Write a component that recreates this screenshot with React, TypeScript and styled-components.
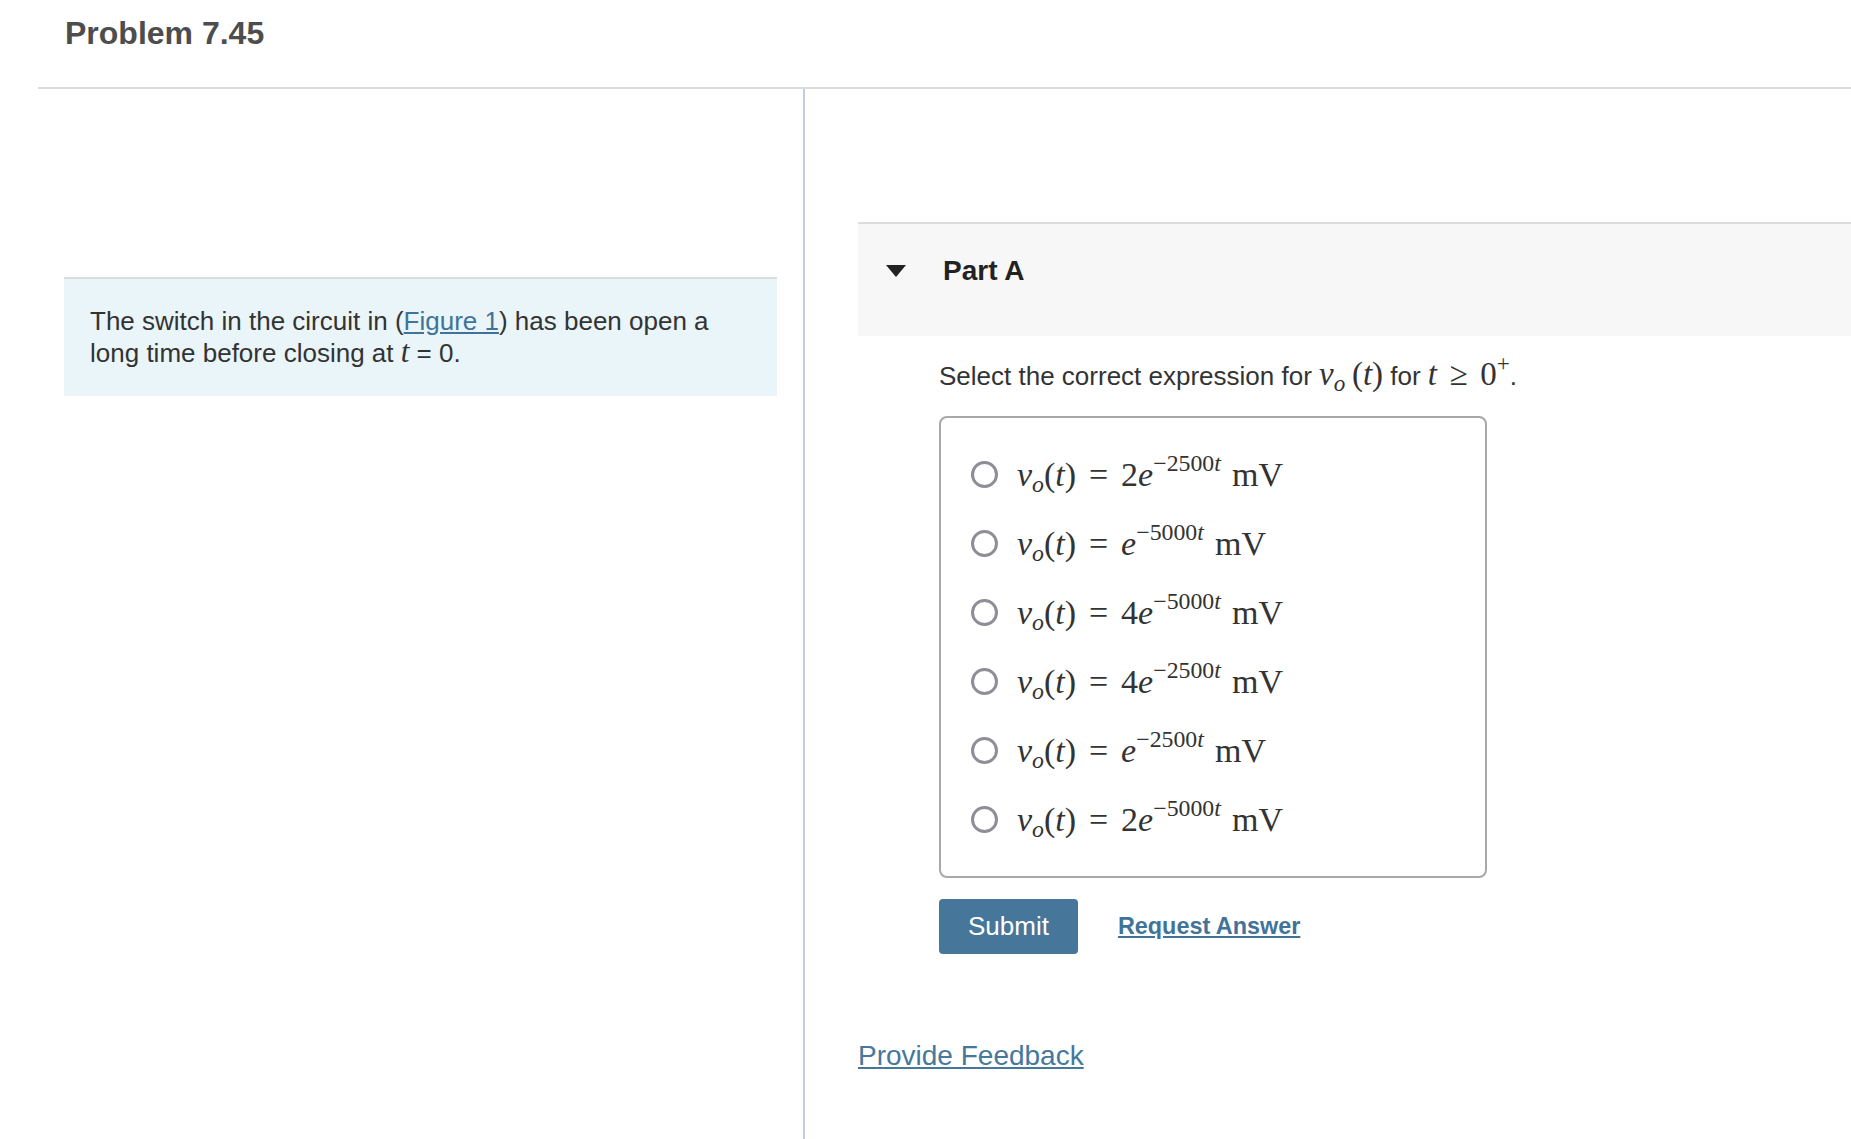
import React from "react";
import styled, { createGlobalStyle } from "styled-components";

type Choice = {
  coef: string;
  exp: string;
};

const choices: Choice[] = [
  { coef: "2", exp: "2500" },
  { coef: "", exp: "5000" },
  { coef: "4", exp: "5000" },
  { coef: "4", exp: "2500" },
  { coef: "", exp: "2500" },
  { coef: "2", exp: "5000" },
];

const GlobalStyle = createGlobalStyle`
  html, body {
    margin: 0;
    padding: 0;
    background: #ffffff;
  }
  body {
    font-family: "Liberation Sans", Arial, sans-serif;
    color: #333333;
  }
`;

const Formula: React.FC<Choice> = ({ coef, exp }) => (
  <MathText $size={34}>
    <Var>v</Var>
    <Sub>o</Sub>(<Var>t</Var>)<Rel>=</Rel>
    {coef}
    <Var>e</Var>
    <Sup>
      −{exp}
      <Var>t</Var>
    </Sup>
    <Unit>mV</Unit>
  </MathText>
);

export default function App() {
  return (
    <>
      <GlobalStyle />
      <Page>
        <Header>
          <Title>Problem 7.45</Title>
        </Header>
        <Columns>
          <LeftColumn>
            <IntroBox>
              The switch in the circuit in (<TextLink href="#">Figure 1</TextLink>) has been
              open a long time before closing at{" "}
              <MathText $size={31}>
                <Var>t</Var>
              </MathText>{" "}
              = 0.
            </IntroBox>
          </LeftColumn>

          <RightColumn>
            <PartHeader>
              <Caret />
              <PartTitle>Part A</PartTitle>
            </PartHeader>

            <PartBody>
              <Prompt>
                Select the correct expression for{" "}
                <MathText $size={33}>
                  <Var>v</Var>
                  <Sub>o</Sub>
                  <Gap />(<Var>t</Var>)
                </MathText>{" "}
                for{" "}
                <MathText $size={33}>
                  <Var>t</Var>
                  <Rel>≥</Rel>0<Sup>+</Sup>
                </MathText>
                .
              </Prompt>

              <ChoiceBox>
                {choices.map((c, i) => (
                  <ChoiceRow key={i}>
                    <Radio />
                    <Formula coef={c.coef} exp={c.exp} />
                  </ChoiceRow>
                ))}
              </ChoiceBox>

              <Actions>
                <SubmitButton type="button">Submit</SubmitButton>
                <RequestLink href="#">Request Answer</RequestLink>
              </Actions>
            </PartBody>

            <Feedback>
              <FeedbackLink href="#">Provide Feedback</FeedbackLink>
            </Feedback>
          </RightColumn>
        </Columns>
      </Page>
    </>
  );
}

const Page = styled.div`
  min-height: 100vh;
  padding-left: 38px;
  box-sizing: border-box;
  display: flex;
  flex-direction: column;
`;

const Header = styled.header`
  height: 89px;
  box-sizing: border-box;
  padding: 14px 0 0 27px;
  border-bottom: 2px solid #dcdcdc;
`;

const Title = styled.h1`
  margin: 0;
  font-size: 32px;
  line-height: 38px;
  font-weight: 700;
  color: #4d4d4d;
`;

const Columns = styled.div`
  flex: 1;
  display: flex;
`;

const LeftColumn = styled.section`
  width: 767px;
  flex-shrink: 0;
  box-sizing: border-box;
  padding: 188px 26px 0;
  border-right: 2px solid #c3ccdc;
`;

const IntroBox = styled.div`
  background: #e9f5f8;
  border-top: 2px solid #dcdcdc;
  padding: 27px 26px 28px;
  font-size: 26px;
  line-height: 30px;
  color: #333333;
`;

const TextLink = styled.a`
  color: #41739a;
  text-decoration: underline;
`;

const RightColumn = styled.section`
  flex: 1;
  padding: 133px 0 0 53px;
`;

const PartHeader = styled.div`
  display: flex;
  align-items: center;
  gap: 37px;
  padding: 30px 0 48px 28px;
  background: #f7f7f8;
  border-top: 2px solid #dcdcdc;
`;

const Caret = styled.span`
  width: 0;
  height: 0;
  border-left: 10.5px solid transparent;
  border-right: 10.5px solid transparent;
  border-top: 12px solid #222222;
`;

const PartTitle = styled.h2`
  margin: 0;
  font-size: 28px;
  line-height: 34px;
  font-weight: 700;
  color: #222222;
`;

const PartBody = styled.div`
  padding-left: 81px;
`;

const Prompt = styled.p`
  margin: 22px 0 0;
  font-size: 26px;
  line-height: 30px;
  color: #333333;
`;

const MathText = styled.span<{ $size?: number }>`
  font-family: "Liberation Serif", "Times New Roman", serif;
  font-size: ${({ $size }) => $size ?? 32}px;
  line-height: 1;
  color: #333333;
  white-space: nowrap;
`;

const Var = styled.i`
  font-style: italic;
`;

const Sub = styled.span`
  font-size: 0.7em;
  font-style: italic;
  vertical-align: -0.24em;
  line-height: 0;
`;

const Sup = styled.span`
  font-size: 0.7em;
  vertical-align: 0.62em;
  line-height: 0;
`;

const Rel = styled.span`
  margin: 0 0.38em;
`;

const Gap = styled.span`
  display: inline-block;
  width: 0.2em;
`;

const Unit = styled.span`
  margin-left: 0.33em;
`;

const ChoiceBox = styled.div`
  margin-top: 25px;
  width: 548px;
  box-sizing: border-box;
  border: 2px solid #a8a8a8;
  border-radius: 8px;
  padding: 22px 30px;
`;

const ChoiceRow = styled.label`
  height: 69px;
  display: flex;
  align-items: center;
  gap: 19px;
  cursor: pointer;
`;

const Radio = styled.span`
  width: 27px;
  height: 27px;
  box-sizing: border-box;
  border: 3.5px solid #8e8e99;
  border-radius: 50%;
  background: #ffffff;
  flex-shrink: 0;
`;

const Actions = styled.div`
  margin-top: 21px;
  display: flex;
  align-items: center;
  gap: 40px;
`;

const SubmitButton = styled.button`
  height: 55px;
  padding: 0 29px;
  border: none;
  border-radius: 4px;
  background: #46769a;
  color: #ffffff;
  font-family: "Liberation Sans", Arial, sans-serif;
  font-size: 26px;
  cursor: pointer;
`;

const RequestLink = styled.a`
  font-size: 23.4px;
  font-weight: 700;
  color: #41739a;
  text-decoration: underline;
`;

const Feedback = styled.div`
  margin-top: 87px;
  font-size: 28px;
  line-height: 30px;
`;

const FeedbackLink = styled.a`
  color: #46789c;
  text-decoration: underline;
`;
